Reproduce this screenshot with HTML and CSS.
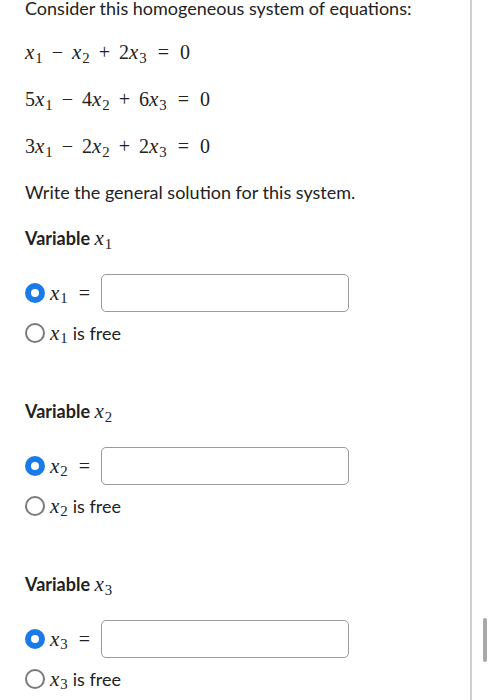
FILE: index.html
```html
<!DOCTYPE html>
<html lang="en">
<head>
  <meta charset="UTF-8">
  <meta name="viewport" content="width=device-width, initial-scale=1.0">
  <title>Homogeneous System</title>
  <link rel="stylesheet" href="styles.css">
</head>
<body>
  <div class="question">
    <p class="intro">Consider this homogeneous system of equations:</p>

    <div class="eq eq-first"><span class="v">x</span><sub>1</sub><span class="op">&minus;</span><span class="v">x</span><sub>2</sub><span class="op">+</span>2<span class="v">x</span><sub>3</sub><span class="op rel">=</span>0</div>
    <div class="eq">5<span class="v">x</span><sub>1</sub><span class="op">&minus;</span>4<span class="v">x</span><sub>2</sub><span class="op">+</span>6<span class="v">x</span><sub>3</sub><span class="op rel">=</span>0</div>
    <div class="eq">3<span class="v">x</span><sub>1</sub><span class="op">&minus;</span>2<span class="v">x</span><sub>2</sub><span class="op">+</span>2<span class="v">x</span><sub>3</sub><span class="op rel">=</span>0</div>

    <p class="instruction">Write the general solution for this system.</p>

    <div class="variable">
      <h4>Variable <span class="m"><span class="v">x</span><sub>1</sub></span></h4>
      <div class="option">
        <span class="radio checked"></span>
        <span class="m"><span class="v">x</span><sub>1</sub><span class="op rel">=</span></span>
        <input type="text" class="answer">
      </div>
      <div class="option free">
        <span class="radio"></span>
        <span class="m"><span class="v">x</span><sub>1</sub></span> is free
      </div>
    </div>

    <div class="variable">
      <h4>Variable <span class="m"><span class="v">x</span><sub>2</sub></span></h4>
      <div class="option">
        <span class="radio checked"></span>
        <span class="m"><span class="v">x</span><sub>2</sub><span class="op rel">=</span></span>
        <input type="text" class="answer">
      </div>
      <div class="option free">
        <span class="radio"></span>
        <span class="m"><span class="v">x</span><sub>2</sub></span> is free
      </div>
    </div>

    <div class="variable">
      <h4>Variable <span class="m"><span class="v">x</span><sub>3</sub></span></h4>
      <div class="option">
        <span class="radio checked"></span>
        <span class="m"><span class="v">x</span><sub>3</sub><span class="op rel">=</span></span>
        <input type="text" class="answer">
      </div>
      <div class="option free">
        <span class="radio"></span>
        <span class="m"><span class="v">x</span><sub>3</sub></span> is free
      </div>
    </div>
  </div>

  <div class="scroll-thumb"></div>
</body>
</html>
```

FILE: styles.css
```css
body {
  margin: 0;
  padding: 0;
  background-color: #ffffff;
  color: #222;
  font-family: 'Lato', 'Open Sans', sans-serif;
  font-size: 18px;
  overflow: hidden;
}
.question {
  width: 445px;
  height: 720px;
  padding-left: 25px;
  border-right: 2px solid #cfcfcf;
  margin-top: -5px;
}
p {
  margin: 0;
  line-height: 26px;
}
.eq {
  font-family: 'Liberation Serif', 'DejaVu Serif', serif;
  font-size: 20px;
  line-height: 26px;
  margin-top: 21px;
}
.eq-first {
  margin-top: 18px;
}
.v {
  font-style: italic;
  font-size: 1.05em;
}
sub {
  font-size: 0.74em;
  vertical-align: -0.25em;
  line-height: 0;
  margin-left: 1px;
}
.op {
  margin: 0 9px;
}
.rel {
  margin: 0 11px;
}
.m {
  font-family: 'Liberation Serif', 'DejaVu Serif', serif;
  font-size: 20px;
  font-weight: normal;
}
.instruction {
  margin-top: 20px;
}
.variable h4 {
  margin: 20px 0 0 0;
  line-height: 26px;
  font-size: 18px;
  font-weight: bold;
}
.variable + .variable h4 {
  margin-top: 52px;
}
.option {
  display: flex;
  align-items: center;
  gap: 5px;
  height: 38px;
  margin-top: 23px;
}
.option .m .rel {
  margin: 0 0 0 11px;
}
.option.free {
  height: 26px;
  margin-top: 8px;
}
.radio {
  box-sizing: border-box;
  width: 20px;
  height: 20px;
  border-radius: 50%;
  border: 2px solid #7a7a7a;
  background: #fff;
  flex-shrink: 0;
}
.radio.checked {
  border: 6px solid #1a7ae8;
}
.answer {
  box-sizing: border-box;
  width: 248px;
  height: 38px;
  margin-left: 6px;
  border: 1.5px solid #9a9a9a;
  border-radius: 5px;
  background: #fff;
}
.scroll-thumb {
  position: absolute;
  left: 483px;
  top: 618px;
  width: 4px;
  height: 44px;
  border-radius: 2px;
  background: #a8a8a8;
}
```
